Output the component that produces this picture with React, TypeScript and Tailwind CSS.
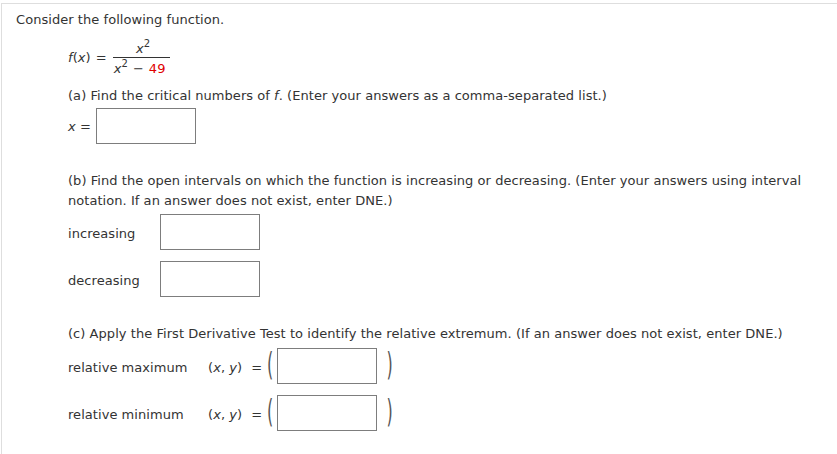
import React from "react";

const Box = () => (
  <div className="w-[100px] h-[36px] border border-[#7d7d7d] bg-white shrink-0" />
);

const BigParen = ({ ch }: { ch: string }) => (
  <span className="inline-block text-[16px] leading-[16px] scale-y-[2] text-[#555]">{ch}</span>
);

const Sup = () => (
  <span className="relative top-[-6px] text-[10px] leading-none align-baseline">2</span>
);

export default function App() {
  return (
    <div
      className="w-[837px] h-[454px] bg-white pt-[3px] pl-[1px] overflow-hidden"
      style={{ fontFamily: 'Verdana, "DejaVu Sans", sans-serif' }}
    >
      <div className="h-full border-t border-l border-[#dedede] pl-[14px] pt-[6px] text-[13px] leading-[20px] text-[#333] tracking-[0.05px]">
        <p>Consider the following function.</p>

        <div className="ml-[52px]">
          {/* function */}
          <div className="mt-[8px] flex items-center">
            <span className="italic">f</span>
            <span>(</span>
            <span className="italic">x</span>
            <span>)</span>
            <span className="ml-[5px]">=</span>
            <div className="ml-[6px] flex flex-col items-center">
              <div className="h-[19px] pt-[3px] leading-[16px] pl-[4px]">
                <span className="italic">x</span>
                <Sup />
              </div>
              <div className="w-[57px] h-[1px] bg-[#333]" />
              <div className="pt-[3px] leading-[16px] pr-[3px]">
                <span className="italic">x</span>
                <Sup />
                <span className="ml-[5px]">&minus;</span>
                <span className="ml-[5px] text-[#e00000]">49</span>
              </div>
            </div>
          </div>

          <p className="mt-[9px]">
            (a) Find the critical numbers of <span className="italic">f</span>. (Enter your answers as a comma-separated list.)
          </p>
          <div className="mt-[2px] flex items-center">
            <span className="w-[28px] shrink-0 pt-[2px]">
              <span className="italic">x</span> =
            </span>
            <Box />
          </div>

          <p className="mt-[27px] pr-[20px]">
            (b) Find the open intervals on which the function is increasing or decreasing. (Enter your answers using interval notation. If an answer does not exist, enter DNE.)
          </p>
          <div className="mt-[3px] flex items-center">
            <span className="w-[92px] shrink-0 pt-[3px]">increasing</span>
            <Box />
          </div>
          <div className="mt-[11px] flex items-center">
            <span className="w-[92px] shrink-0 pt-[3px]">decreasing</span>
            <Box />
          </div>

          <p className="mt-[27px]">
            (c) Apply the First Derivative Test to identify the relative extremum. (If an answer does not exist, enter DNE.)
          </p>
          {["relative maximum", "relative minimum"].map((label, i) => (
            <div key={label} className={`${i === 0 ? "mt-[4px]" : "mt-[11px]"} flex items-center`}>
              <span className="w-[140px] shrink-0 pt-[3px]">{label}</span>
              <span className="pt-[3px]">
                (<span className="italic">x</span>, <span className="italic">y</span>)
              </span>
              <span className="ml-[9px] pt-[3px]">=</span>
              <span className="ml-[5px] mr-[4px]"><BigParen ch="(" /></span>
              <Box />
              <span className="ml-[9px]"><BigParen ch=")" /></span>
            </div>
          ))}
        </div>
      </div>
    </div>
  );
}
